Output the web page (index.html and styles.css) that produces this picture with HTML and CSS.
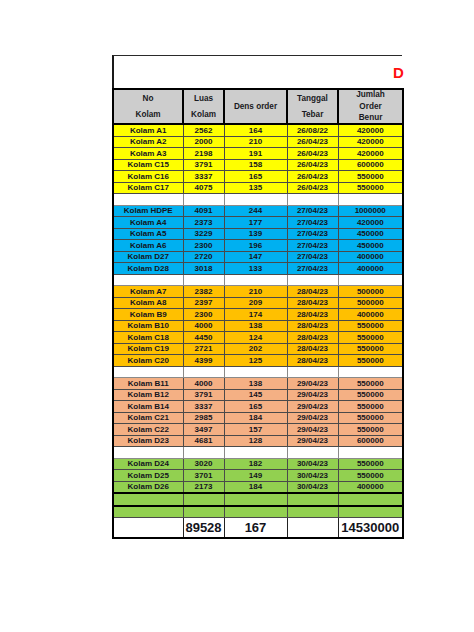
FILE: index.html
```html
<!DOCTYPE html>
<html>
<head>
<meta charset="utf-8">
<link rel="stylesheet" href="styles.css">
</head>
<body>
<div class="sheet">
  <div class="title"><span class="title-text">D</span></div>
  <table class="grid">
    <colgroup>
      <col class="c1"><col class="c2"><col class="c3"><col class="c4"><col class="c5">
    </colgroup>
    <thead>
      <tr class="head">
        <th><div class="stack"><span>No</span><span>Kolam</span></div></th>
        <th><div class="stack"><span>Luas</span><span>Kolam</span></div></th>
        <th>Dens order</th>
        <th><div class="stack"><span>Tanggal</span><span>Tebar</span></div></th>
        <th><div class="stack tight"><span>Jumlah</span><span>Order</span><span>Benur</span></div></th>
      </tr>
    </thead>
    <tbody>
      <tr class="yellow"><td>Kolam A1</td><td>2562</td><td>164</td><td>26/08/22</td><td>420000</td></tr>
      <tr class="yellow"><td>Kolam A2</td><td>2000</td><td>210</td><td>26/04/23</td><td>420000</td></tr>
      <tr class="yellow"><td>Kolam A3</td><td>2198</td><td>191</td><td>26/04/23</td><td>420000</td></tr>
      <tr class="yellow"><td>Kolam C15</td><td>3791</td><td>158</td><td>26/04/23</td><td>600000</td></tr>
      <tr class="yellow"><td>Kolam C16</td><td>3337</td><td>165</td><td>26/04/23</td><td>550000</td></tr>
      <tr class="yellow"><td>Kolam C17</td><td>4075</td><td>135</td><td>26/04/23</td><td>550000</td></tr>
      <tr class="blank"><td></td><td></td><td></td><td></td><td></td></tr>
      <tr class="blue"><td>Kolam HDPE</td><td>4091</td><td>244</td><td>27/04/23</td><td>1000000</td></tr>
      <tr class="blue"><td>Kolam A4</td><td>2373</td><td>177</td><td>27/04/23</td><td>420000</td></tr>
      <tr class="blue"><td>Kolam A5</td><td>3229</td><td>139</td><td>27/04/23</td><td>450000</td></tr>
      <tr class="blue"><td>Kolam A6</td><td>2300</td><td>196</td><td>27/04/23</td><td>450000</td></tr>
      <tr class="blue"><td>Kolam D27</td><td>2720</td><td>147</td><td>27/04/23</td><td>400000</td></tr>
      <tr class="blue"><td>Kolam D28</td><td>3018</td><td>133</td><td>27/04/23</td><td>400000</td></tr>
      <tr class="blank"><td></td><td></td><td></td><td></td><td></td></tr>
      <tr class="orange"><td>Kolam A7</td><td>2382</td><td>210</td><td>28/04/23</td><td>500000</td></tr>
      <tr class="orange"><td>Kolam A8</td><td>2397</td><td>209</td><td>28/04/23</td><td>500000</td></tr>
      <tr class="orange"><td>Kolam B9</td><td>2300</td><td>174</td><td>28/04/23</td><td>400000</td></tr>
      <tr class="orange"><td>Kolam B10</td><td>4000</td><td>138</td><td>28/04/23</td><td>550000</td></tr>
      <tr class="orange"><td>Kolam C18</td><td>4450</td><td>124</td><td>28/04/23</td><td>550000</td></tr>
      <tr class="orange"><td>Kolam C19</td><td>2721</td><td>202</td><td>28/04/23</td><td>550000</td></tr>
      <tr class="orange"><td>Kolam C20</td><td>4399</td><td>125</td><td>28/04/23</td><td>550000</td></tr>
      <tr class="blank"><td></td><td></td><td></td><td></td><td></td></tr>
      <tr class="salmon"><td>Kolam B11</td><td>4000</td><td>138</td><td>29/04/23</td><td>550000</td></tr>
      <tr class="salmon"><td>Kolam B12</td><td>3791</td><td>145</td><td>29/04/23</td><td>550000</td></tr>
      <tr class="salmon"><td>Kolam B14</td><td>3337</td><td>165</td><td>29/04/23</td><td>550000</td></tr>
      <tr class="salmon"><td>Kolam C21</td><td>2985</td><td>184</td><td>29/04/23</td><td>550000</td></tr>
      <tr class="salmon"><td>Kolam C22</td><td>3497</td><td>157</td><td>29/04/23</td><td>550000</td></tr>
      <tr class="salmon"><td>Kolam D23</td><td>4681</td><td>128</td><td>29/04/23</td><td>600000</td></tr>
      <tr class="blank"><td></td><td></td><td></td><td></td><td></td></tr>
      <tr class="green"><td>Kolam D24</td><td>3020</td><td>182</td><td>30/04/23</td><td>550000</td></tr>
      <tr class="green"><td>Kolam D25</td><td>3701</td><td>149</td><td>30/04/23</td><td>550000</td></tr>
      <tr class="green thick"><td>Kolam D26</td><td>2173</td><td>184</td><td>30/04/23</td><td>400000</td></tr>
      <tr class="green thick"><td></td><td></td><td></td><td></td><td></td></tr>
      <tr class="green"><td></td><td></td><td></td><td></td><td></td></tr>
      <tr class="total"><td></td><td>89528</td><td>167</td><td></td><td>14530000</td></tr>
    </tbody>
  </table>
</div>
</body>
</html>
```

FILE: styles.css
```css
html, body {
  margin: 0;
  padding: 0;
  background: #ffffff;
}

body {
  font-family: "Liberation Sans", Arial, sans-serif;
  color: #141420;
}

.sheet {
  margin: 55px 0 0 112px;
  width: 290px;
}

.title {
  height: 33px;
  border-top: 1px solid #2a2a2a;
  border-left: 2px solid #1a1a1a;
  white-space: nowrap;
  box-sizing: border-box;
  padding-left: 279px;
  padding-top: 8px;
  width: 290px;
}

.title-text {
  color: #ff1010;
  font-weight: bold;
  font-size: 15px;
  line-height: 18px;
}

.grid {
  border-collapse: collapse;
  table-layout: fixed;
  width: 290px;
  border: 2px solid #000;
}

.c1 { width: 70px; }
.c2 { width: 41px; }
.c3 { width: 63px; }
.c4 { width: 51px; }
.c5 { width: 65px; }

.head th {
  background: #cdcdcd;
  border: 2px solid #000;
  height: 33px;
  padding: 0;
  font-size: 8.2px;
  font-weight: bold;
  text-align: center;
  vertical-align: middle;
  color: #1a1a22;
}

.stack {
  display: flex;
  flex-direction: column;
  align-items: center;
  gap: 6px;
  line-height: 10px;
}

.stack.tight {
  gap: 1.5px;
}

td {
  height: 10.5px;
  padding: 0;
  border: 1px solid #4a4a4a;
  font-size: 8px;
  font-weight: bold;
  line-height: 9px;
  text-align: center;
  vertical-align: middle;
  white-space: nowrap;
  overflow: hidden;
}

.yellow td { background: #ffff00; }
.blue td { background: #00b0f0; }
.orange td { background: #ffc000; }
.salmon td { background: #f4b084; }
.green td { background: #92d050; }
.blank td { background: #ffffff; border-color: #8a8a8a; }

.thick td {
  border-bottom: 2px solid #000;
}

.total td {
  background: #ffffff;
  height: 19px;
  font-size: 13px;
  line-height: 14px;
  border: 1px solid #222;
  border-bottom: 2px solid #000;
}
```
